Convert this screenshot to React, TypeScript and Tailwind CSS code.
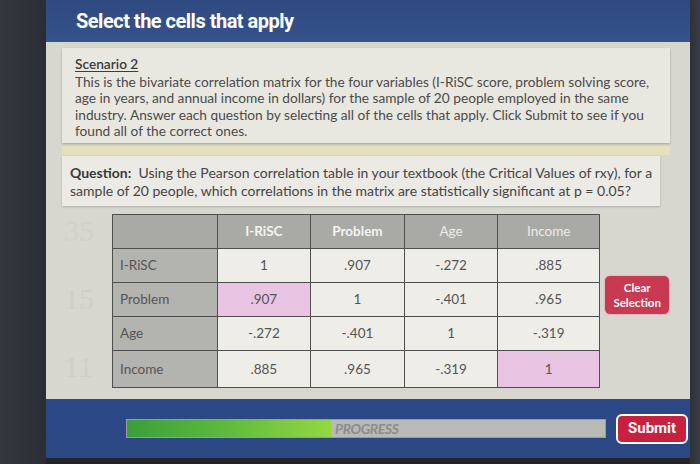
import React from 'react'

const cols = ['I-RiSC', 'Problem', 'Age', 'Income']
const rows: { name: string; vals: string[] }[] = [
  { name: 'I-RiSC', vals: ['1', '.907', '-.272', '.885'] },
  { name: 'Problem', vals: ['.907', '1', '-.401', '.965'] },
  { name: 'Age', vals: ['-.272', '-.401', '1', '-.319'] },
  { name: 'Income', vals: ['.885', '.965', '-.319', '1'] },
]
const picked = new Set(['1-0', '3-3'])

export default function App() {
  return (
    <div className="w-[700px] h-[464px] bg-[#2b2e34] flex overflow-hidden" style={{ fontFamily: 'Lato, "Open Sans", sans-serif' }}>
      <div className="w-[46px] shrink-0 bg-gradient-to-r from-[#34373d] to-[#2a2d33]" />
      <div className="w-[644px] shrink-0 flex flex-col">
        <header className="h-[42px] bg-gradient-to-b from-[#2f4a80] to-[#35528c] flex items-center pl-[30px]">
          <h1 className="text-white text-[20px] font-bold tracking-[-0.5px]" style={{ fontFamily: 'Roboto, sans-serif' }}>
            Select the cells that apply
          </h1>
        </header>

        <main className="h-[357px] bg-[#d8d7cf] flex flex-col pt-[6px] pl-[16px] pr-[20px]">
          <section className="h-[95px] bg-[#e8e7e0] shadow-[0_1px_2px_rgba(0,0,0,0.25)] pl-[13px] pr-[4px] pt-[8px] text-[#4b4b4b] text-[13.7px] leading-[16.6px] whitespace-nowrap">
            <div className="font-semibold underline underline-offset-2 text-[#3c3c3c] mb-[1px]">Scenario 2</div>
            <p>
              This is the bivariate correlation matrix for the four variables (I-RiSC score, problem solving score,
              <br />
              age in years, and annual income in dollars) for the sample of 20 people employed in the same
              <br />
              industry. Answer each question by selecting all of the cells that apply. Click Submit to see if you
              <br />
              found all of the correct ones.
            </p>
          </section>

          <div className="h-[9px] mt-[3px] bg-[#e4dfbd]" />

          <section className="h-[50px] mt-[1px] mr-[10px] bg-[#ebeae4] shadow-[0_1px_2px_rgba(0,0,0,0.2)] pl-[8px] pt-[8px] text-[#454545] text-[14px] leading-[17.5px] whitespace-nowrap">
            <p>
              <span className="font-bold text-[#3a3a3a]">Question:</span>&nbsp; Using the Pearson correlation table in your textbook (the Critical Values of rxy), for a
              <br />
              sample of 20 people, which correlations in the matrix are statistically significant at p = 0.05?
            </p>
          </section>

          <div className="flex items-start mt-[8px]">
            <div className="w-[50px] shrink-0 flex flex-col text-[30px] leading-[34px] font-light text-[#cfcec6] pl-[2px] select-none" style={{ fontFamily: '"Liberation Serif", serif' }}>
              <span className="h-[34px] opacity-50">35</span>
              <span className="h-[34px]" />
              <span className="h-[34px] opacity-80">15</span>
              <span className="h-[34px]" />
              <span className="h-[34px] opacity-80">11</span>
            </div>
            <table className="border-collapse text-[13.5px] text-[#555] border border-[#4f4f4f]">
              <thead>
                <tr className="h-[34px] bg-[#a9a9a6]">
                  <th className="w-[108px] border border-[#4f4f4f]" />
                  {cols.map((c, i) => (
                    <th
                      key={c}
                      className={`border border-[#4f4f4f] ${i === 3 ? 'w-[106px]' : 'w-[97px]'} ${i < 2 ? 'font-bold text-[#f4f4f2]' : 'font-normal text-[#ececea]'}`}
                    >
                      {c}
                    </th>
                  ))}
                </tr>
              </thead>
              <tbody>
                {rows.map((r, ri) => (
                  <tr key={r.name} className={ri === 3 ? 'h-[37px]' : 'h-[34px]'}>
                    <td className="bg-[#b3b3b0] border border-[#4f4f4f] pl-[7px] text-[#555] font-normal">{r.name}</td>
                    {r.vals.map((v, ci) => (
                      <td
                        key={ci}
                        className={`border border-[#4f4f4f] text-center ${picked.has(`${ri}-${ci}`) ? 'bg-[#e9c4e2]' : 'bg-[#eeede8]'}`}
                      >
                        {v}
                      </td>
                    ))}
                  </tr>
                ))}
              </tbody>
            </table>
            <button className="ml-[4px] mt-[61px] w-[68px] h-[40px] rounded-[6px] bg-[#c73a52] text-white text-[11.5px] font-bold leading-[15px] border border-[#e8b8c0]">
              Clear
              <br />
              Selection
            </button>
          </div>
        </main>

        <footer className="h-[59px] bg-gradient-to-b from-[#2c4886] to-[#2b4784] flex items-center pl-[80px] pr-[2px]">
          <div className="w-[481px] h-[19px] bg-[#b9b9b6] flex items-center border border-[#9a9a98]">
            <div className="w-[204px] h-full bg-gradient-to-r from-[#3a9f39] via-[#5fbb3e] to-[#94d743]" />
            <span className="ml-[4px] text-[14px] italic font-bold tracking-[-0.4px] text-[#8c8c8a]">PROGRESS</span>
          </div>
          <button className="ml-[10px] w-[72px] h-[30px] rounded-[6px] bg-[#c8213d] border-2 border-white text-white text-[15px] font-bold" style={{ fontFamily: 'Roboto, sans-serif' }}>
            Submit
          </button>
        </footer>
        <div className="flex-1 bg-[#222429]" />
      </div>
      <div className="flex-1 bg-gradient-to-r from-[#2e3138] to-[#3a3d44]" />
    </div>
  )
}
